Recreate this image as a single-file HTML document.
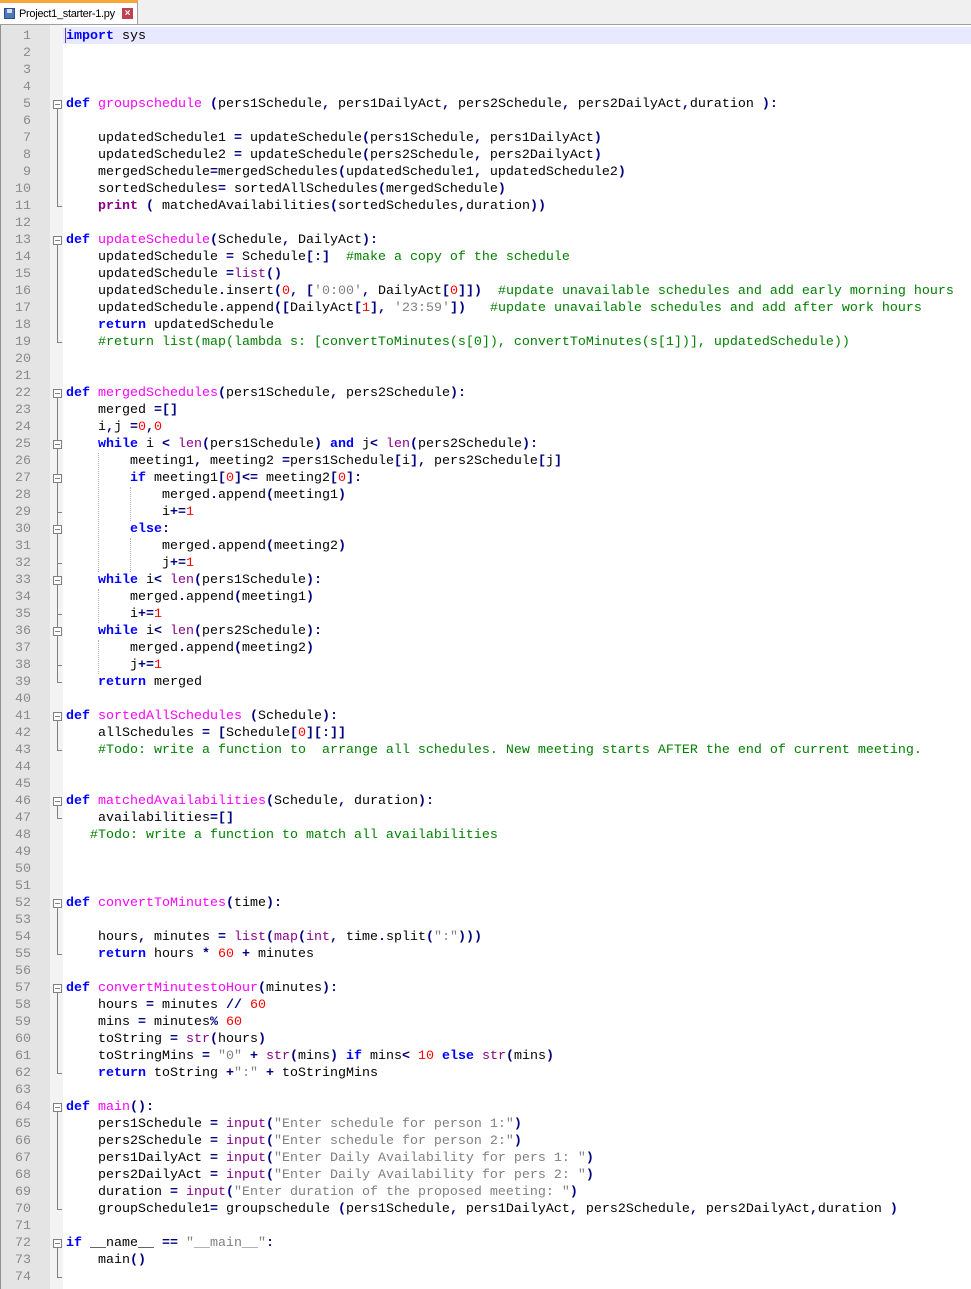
<!DOCTYPE html>
<html><head><meta charset="utf-8">
<style>
html,body{margin:0;padding:0;width:971px;height:1289px;overflow:hidden;background:#fff;}
#tabbar{position:absolute;left:0;top:0;width:971px;height:24px;background:#f0f0f0;border-bottom:1px solid #a0a0a0;}
#tab{position:absolute;left:0;top:0;width:138px;height:24px;background:#fff;border-top:3px solid #f9a53a;box-sizing:border-box;border-right:1px solid #a0a0a0;font:11px "Liberation Sans",sans-serif;}
#tab .t{position:absolute;left:19px;top:5px;letter-spacing:-0.3px;color:#000;}
#tab .ic{position:absolute;left:4px;top:5px;width:11px;height:11px;background:#4a78b8;border:1px solid #2a4f88;box-sizing:border-box;}
#tab .ic:after{content:"";position:absolute;left:2px;top:0;width:5px;height:4px;background:#dde;}
#tab .x{position:absolute;left:122px;top:5px;width:11px;height:11px;background:#c04050;color:#fff;font:bold 10px/11px "Liberation Sans",sans-serif;text-align:center;}
#gut{position:absolute;left:0;top:25px;width:50px;height:1264px;background:#e4e4e4;border-left:1px solid #909090;box-sizing:border-box;}
#fold{position:absolute;left:50px;top:25px;width:13px;height:1264px;background:#f3f3f3;}
#cur{position:absolute;left:63px;top:27px;width:908px;height:17px;background:#e8e8ff;}
#caret{position:absolute;left:65px;top:28px;width:1px;height:15px;background:#6040a0;}
.ln{position:absolute;left:0;width:31px;text-align:right;color:#8a8a8a;font:13.33px/17px "Liberation Mono",monospace;}
#code{position:absolute;left:66px;top:28px;margin:0;font:13.33px/17px "Liberation Mono",monospace;color:#000;white-space:pre;}
#code div{height:17px;}
.k{color:#0000ff;font-weight:bold}
.f{color:#ff00ff}
.b{color:#880088}
.n{color:#ff0000}
.s{color:#808080}
.c{color:#008000}
.o{color:#000080;font-weight:bold}
.fb{position:absolute;left:53px;width:9px;height:9px;border:1px solid #808080;box-sizing:border-box;background:#fff;}
.fb:after{content:"";position:absolute;left:1px;top:3px;width:5px;height:1px;background:#808080;}
.fl{position:absolute;left:57px;width:1px;background:#808080;}
.ft{position:absolute;left:57px;width:5px;height:1px;background:#808080;}
.g{position:absolute;width:0;border-left:1px dotted #b0b0b0;}
</style></head><body>
<div id="tabbar"><div id="tab"><div class="ic"></div><span class="t">Project1_starter-1.py</span><div class="x">×</div></div></div>
<div id="gut"></div>
<div id="fold"></div>
<div id="cur"></div>
<div id="nums"></div>
<div id="folds"></div>
<pre id="code"><div><span class="k">import</span> sys</div>
<div></div>
<div></div>
<div></div>
<div><span class="k">def</span> <span class="f">groupschedule</span> (pers1Schedule, pers1DailyAct, pers2Schedule, pers2DailyAct,duration ):</div>
<div></div>
<div>    updatedSchedule1 = updateSchedule(pers1Schedule, pers1DailyAct)</div>
<div>    updatedSchedule2 = updateSchedule(pers2Schedule, pers2DailyAct)</div>
<div>    mergedSchedule=mergedSchedules(updatedSchedule1, updatedSchedule2)</div>
<div>    sortedSchedules= sortedAllSchedules(mergedSchedule)</div>
<div>    <span class="b" style="font-weight:bold">print</span> ( matchedAvailabilities(sortedSchedules,duration))</div>
<div></div>
<div><span class="k">def</span> <span class="f">updateSchedule</span>(Schedule, DailyAct):</div>
<div>    updatedSchedule = Schedule[:]  <span class="c">#make a copy of the schedule</span></div>
<div>    updatedSchedule =<span class="b">list</span>()</div>
<div>    updatedSchedule.insert(<span class="n">0</span>, [<span class="s">'0:00'</span>, DailyAct[<span class="n">0</span>]])  <span class="c">#update unavailable schedules and add early morning hours</span></div>
<div>    updatedSchedule.append([DailyAct[<span class="n">1</span>], <span class="s">'23:59'</span>])   <span class="c">#update unavailable schedules and add after work hours</span></div>
<div>    <span class="k">return</span> updatedSchedule</div>
<div>    <span class="c">#return list(map(lambda s: [convertToMinutes(s[0]), convertToMinutes(s[1])], updatedSchedule))</span></div>
<div></div>
<div></div>
<div><span class="k">def</span> <span class="f">mergedSchedules</span>(pers1Schedule, pers2Schedule):</div>
<div>    merged =[]</div>
<div>    i,j =<span class="n">0</span>,<span class="n">0</span></div>
<div>    <span class="k">while</span> i &lt; <span class="b">len</span>(pers1Schedule) <span class="k">and</span> j&lt; <span class="b">len</span>(pers2Schedule):</div>
<div>        meeting1, meeting2 =pers1Schedule[i], pers2Schedule[j]</div>
<div>        <span class="k">if</span> meeting1[<span class="n">0</span>]&lt;= meeting2[<span class="n">0</span>]:</div>
<div>            merged.append(meeting1)</div>
<div>            i+=<span class="n">1</span></div>
<div>        <span class="k">else</span>:</div>
<div>            merged.append(meeting2)</div>
<div>            j+=<span class="n">1</span></div>
<div>    <span class="k">while</span> i&lt; <span class="b">len</span>(pers1Schedule):</div>
<div>        merged.append(meeting1)</div>
<div>        i+=<span class="n">1</span></div>
<div>    <span class="k">while</span> i&lt; <span class="b">len</span>(pers2Schedule):</div>
<div>        merged.append(meeting2)</div>
<div>        j+=<span class="n">1</span></div>
<div>    <span class="k">return</span> merged</div>
<div></div>
<div><span class="k">def</span> <span class="f">sortedAllSchedules</span> (Schedule):</div>
<div>    allSchedules = [Schedule[<span class="n">0</span>][:]]</div>
<div>    <span class="c">#Todo: write a function to  arrange all schedules. New meeting starts AFTER the end of current meeting.</span></div>
<div></div>
<div></div>
<div><span class="k">def</span> <span class="f">matchedAvailabilities</span>(Schedule, duration):</div>
<div>    availabilities=[]</div>
<div>   <span class="c">#Todo: write a function to match all availabilities</span></div>
<div></div>
<div></div>
<div></div>
<div><span class="k">def</span> <span class="f">convertToMinutes</span>(time):</div>
<div></div>
<div>    hours, minutes = <span class="b">list</span>(<span class="b">map</span>(<span class="b">int</span>, time.split(<span class="s">":"</span>)))</div>
<div>    <span class="k">return</span> hours * <span class="n">60</span> + minutes</div>
<div></div>
<div><span class="k">def</span> <span class="f">convertMinutestoHour</span>(minutes):</div>
<div>    hours = minutes // <span class="n">60</span></div>
<div>    mins = minutes% <span class="n">60</span></div>
<div>    toString = <span class="b">str</span>(hours)</div>
<div>    toStringMins = <span class="s">"0"</span> + <span class="b">str</span>(mins) <span class="k">if</span> mins&lt; <span class="n">10</span> <span class="k">else</span> <span class="b">str</span>(mins)</div>
<div>    <span class="k">return</span> toString +<span class="s">":"</span> + toStringMins</div>
<div></div>
<div><span class="k">def</span> <span class="f">main</span>():</div>
<div>    pers1Schedule = <span class="b">input</span>(<span class="s">"Enter schedule for person 1:"</span>)</div>
<div>    pers2Schedule = <span class="b">input</span>(<span class="s">"Enter schedule for person 2:"</span>)</div>
<div>    pers1DailyAct = <span class="b">input</span>(<span class="s">"Enter Daily Availability for pers 1: "</span>)</div>
<div>    pers2DailyAct = <span class="b">input</span>(<span class="s">"Enter Daily Availability for pers 2: "</span>)</div>
<div>    duration = <span class="b">input</span>(<span class="s">"Enter duration of the proposed meeting: "</span>)</div>
<div>    groupSchedule1= groupschedule (pers1Schedule, pers1DailyAct, pers2Schedule, pers2DailyAct,duration )</div>
<div></div>
<div><span class="k">if</span> __name__ == <span class="s">"__main__"</span>:</div>
<div>    main()</div>
<div></div></pre>
<div id="caret"></div>
<script>
(function(){
var code=document.getElementById('code');
Array.prototype.slice.call(code.childNodes).forEach(function(n){if(n.nodeType===3)code.removeChild(n);});
function walk(el){
 Array.prototype.slice.call(el.childNodes).forEach(function(n){
  if(n.nodeType===3){
   var t=n.nodeValue; if(!/[=()\[\],:.<>+*\/%]/.test(t))return;
   var frag=document.createDocumentFragment();
   t.split(/([=()\[\],:.<>+*\/%]+)/).forEach(function(p,i){
    if(!p)return;
    if(i%2){var s=document.createElement('span');s.className='o';s.textContent=p;frag.appendChild(s);}
    else frag.appendChild(document.createTextNode(p));
   });
   el.replaceChild(frag,n);
  } else if(n.nodeType===1 && n.tagName==='DIV'){walk(n);}
 });
}
walk(code);
var nums=document.getElementById('nums'),h='';
for(var i=1;i<=74;i++){h+='<div class="ln" style="top:'+(28+(i-1)*17)+'px">'+i+'</div>';}
nums.innerHTML=h;
var T=function(n){return 28+(n-1)*17;};
var f='';
var blocks=[[5,11],[13,19],[22,39],[41,43],[46,47],[52,55],[57,62],[64,70],[72,74]];
blocks.forEach(function(b){var y1=T(b[0])+13,y2=T(b[1])+8;f+='<div class="fl" style="top:'+y1+'px;height:'+(y2-y1)+'px"></div><div class="ft" style="top:'+y2+'px"></div>';});
[29,32,35,38].forEach(function(n){f+='<div class="ft" style="top:'+(T(n)+8)+'px"></div>';});
var boxes=[5,13,22,25,27,30,33,36,41,46,52,57,64,72];
boxes.forEach(function(n){f+='<div class="fb" style="top:'+(T(n)+4)+'px"></div>';});
var guides=[[98,26,32],[98,34,35],[98,37,38],[130,28,29],[130,31,32]];
guides.forEach(function(g){f+='<div class="g" style="left:'+g[0]+'px;top:'+T(g[1])+'px;height:'+((g[2]-g[1]+1)*17)+'px"></div>';});
document.getElementById('folds').innerHTML=f;
})();
</script>
</body></html>
